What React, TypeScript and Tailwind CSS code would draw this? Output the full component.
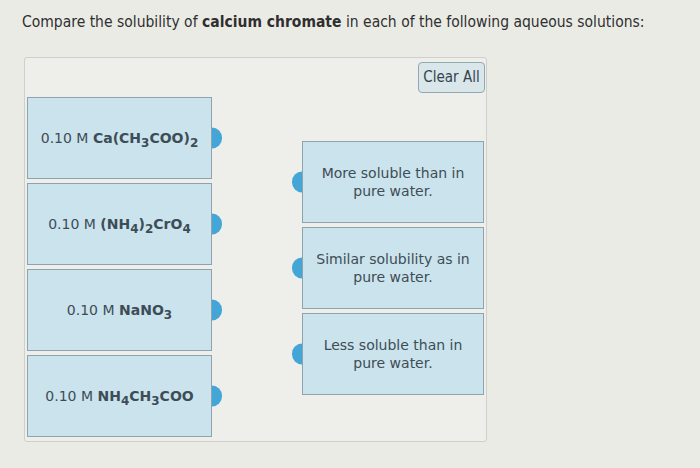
import React from "react";

const font = { fontFamily: '"DejaVu Sans", Verdana, sans-serif' };
const condensed = { fontFamily: '"DejaVu Sans Condensed", "DejaVu Sans", sans-serif' };

function Sub({ children }: { children: React.ReactNode }) {
  return <sub className="text-[12px] relative top-[4px] align-baseline">{children}</sub>;
}

const solutions: React.ReactNode[] = [
  <>
    0.10 M <b>Ca(CH<Sub>3</Sub>COO)<Sub>2</Sub></b>
  </>,
  <>
    0.10 M <b>(NH<Sub>4</Sub>)<Sub>2</Sub>CrO<Sub>4</Sub></b>
  </>,
  <>
    0.10 M <b>NaNO<Sub>3</Sub></b>
  </>,
  <>
    0.10 M <b>NH<Sub>4</Sub>CH<Sub>3</Sub>COO</b>
  </>,
];

const answers = [
  ["More soluble than in", "pure water."],
  ["Similar solubility as in", "pure water."],
  ["Less soluble than in", "pure water."],
];

function LeftCard({ children }: { children: React.ReactNode }) {
  return (
    <div className="relative w-[185px] h-[82px] bg-[#cbe3ec] border border-[#8ea3ad] flex items-center justify-center text-[14px] text-[#3d4d57]">
      <span className="whitespace-nowrap">{children}</span>
      <span className="absolute right-[-11px] top-1/2 -translate-y-1/2 w-[10px] h-[21px] rounded-r-full bg-[#44a6d6]" />
    </div>
  );
}

function RightCard({ lines }: { lines: string[] }) {
  return (
    <div className="relative w-[182px] h-[82px] bg-[#cbe3ec] border border-[#8ea3ad] flex flex-col items-center justify-center text-[14px] leading-[18px] text-[#3d4d57] text-center">
      {lines.map((l) => (
        <span key={l}>{l}</span>
      ))}
      <span className="absolute left-[-11px] top-1/2 -translate-y-1/2 w-[10px] h-[21px] rounded-l-full bg-[#44a6d6]" />
    </div>
  );
}

export default function App() {
  return (
    <div className="w-[700px] h-[468px] bg-[#ebebe6] overflow-hidden" style={font}>
      <p className="pt-[11px] pl-[22px] text-[15.5px] leading-[23px] text-[#2f2f2f] whitespace-nowrap" style={condensed}>
        Compare the solubility of <b>calcium chromate</b> in each of the following aqueous solutions:
      </p>
      <div className="ml-[24px] mt-[23px] w-[463px] h-[385px] border border-[#cfcfcb] rounded-[3px] bg-[#eeeeea] flex flex-col">
        <div className="flex justify-end pt-[4px] pr-[1px]">
          <button
            className="h-[31px] w-[67px] rounded-[4px] border border-[#93a9b2] bg-[#d9e6ea] text-[15px] text-[#34444e] whitespace-nowrap"
            style={condensed}
          >
            Clear All
          </button>
        </div>
        <div className="flex pl-[2px] mt-[4px]">
          <div className="flex flex-col gap-[4px]">
            {solutions.map((s, i) => (
              <LeftCard key={i}>{s}</LeftCard>
            ))}
          </div>
          <div className="flex flex-col gap-[4px] ml-[90px] mt-[44px]">
            {answers.map((a) => (
              <RightCard key={a[0]} lines={a} />
            ))}
          </div>
        </div>
      </div>
    </div>
  );
}
